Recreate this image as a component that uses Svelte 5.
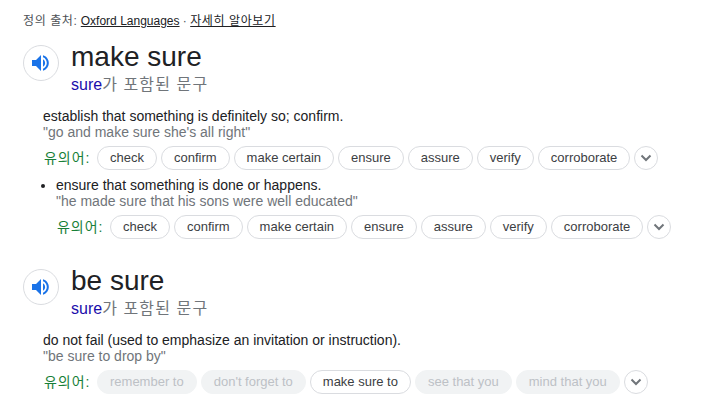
<script>
  const sense1 = ['check', 'confirm', 'make certain', 'ensure', 'assure', 'verify', 'corroborate'];
  const sense3 = [
    { t: 'remember to', off: true },
    { t: "don't forget to", off: true },
    { t: 'make sure to', off: false },
    { t: 'see that you', off: true },
    { t: 'mind that you', off: true }
  ];
</script>

{#snippet speaker()}
  <button class="speaker" aria-label="듣기">
    <svg width="20" height="20" viewBox="0 0 20 20">
      <path d="M1 7h4l5-5v16l-5-5H1z" fill="#1a73e8" />
      <path d="M12 6.2c1.3.8 2.1 2.2 2.1 3.8s-.8 3-2.1 3.8z" fill="#1a73e8" />
      <path d="M12 2.3c3.3.9 5.8 4 5.8 7.7s-2.5 6.8-5.8 7.7v-2c2.2-.8 3.8-3.1 3.8-5.7s-1.6-4.9-3.8-5.7z" fill="#1a73e8" />
    </svg>
  </button>
{/snippet}

{#snippet synonyms(items)}
  <div class="syn">
    <span class="syn-label ko">유의어:</span>
    {#each items as item}
      <span class="chip" class:off={item.off}>{item.t ?? item}</span>
    {/each}
    <button class="more" aria-label="더보기">
      <svg width="12" height="8" viewBox="0 0 12 8">
        <path d="M1.5 1.5 6 6l4.5-4.5" fill="none" stroke="#70757a" stroke-width="2" />
      </svg>
    </button>
  </div>
{/snippet}

<div class="page">
  <div class="source">
    <span class="ko">정의 출처:</span> <a href="#src">Oxford Languages</a> · <a class="ko" href="#more">자세히 알아보기</a>
  </div>

  <section class="entry">
    <div class="head">
      {@render speaker()}
      <div>
        <h2>make sure</h2>
        <div class="sub"><span class="hl">sure</span><span class="ko">가 포함된 문구</span></div>
      </div>
    </div>
    <div class="body">
      <div class="def">establish that something is definitely so; confirm.</div>
      <div class="ex">"go and make sure she's all right"</div>
      {@render synonyms(sense1)}
      <ul>
        <li>
          <div class="def">ensure that something is done or happens.</div>
          <div class="ex">"he made sure that his sons were well educated"</div>
          {@render synonyms(sense1)}
        </li>
      </ul>
    </div>
  </section>

  <section class="entry second">
    <div class="head">
      {@render speaker()}
      <div>
        <h2>be sure</h2>
        <div class="sub"><span class="hl">sure</span><span class="ko">가 포함된 문구</span></div>
      </div>
    </div>
    <div class="body">
      <div class="def">do not fail (used to emphasize an invitation or instruction).</div>
      <div class="ex">"be sure to drop by"</div>
      {@render synonyms(sense3)}
    </div>
  </section>
</div>

<style>
  :global(body) {
    background: #fff;
  }

  .page {
    height: 414px;
    box-sizing: border-box;
    padding: 13px 0 0 23px;
    overflow: hidden;
    font-family: "Liberation Sans", "Noto Sans CJK KR", sans-serif;
    color: #202124;
  }

  /* hangul in the reference runs a full em wide */
  .ko {
    letter-spacing: 0.07em;
  }

  .source {
    font-size: 12px;
    line-height: 16px;
    color: #4d5156;
  }

  .source .ko {
    letter-spacing: 0.05em;
  }

  .source a {
    color: #202124;
    text-decoration: underline;
  }

  .entry {
    margin-top: 16px;
  }

  .entry.second {
    margin-top: 30px;
  }

  .head {
    display: flex;
    align-items: flex-start;
    gap: 12px;
  }

  .speaker {
    flex: none;
    width: 36px;
    height: 36px;
    padding: 0;
    display: flex;
    align-items: center;
    justify-content: center;
    background: #fff;
    border: 1px solid #dadce0;
    border-radius: 50%;
  }

  h2 {
    margin: -6px 0 0;
    font-size: 28px;
    line-height: 36px;
    font-weight: 400;
  }

  .sub {
    font-size: 16px;
    line-height: 20px;
    color: #70757a;
  }

  .hl {
    color: #1a0dab;
  }

  .body {
    margin: 13px 0 0 20px;
    font-size: 14px;
    line-height: 16px;
  }

  .ex {
    color: #70757a;
  }

  .syn {
    display: flex;
    align-items: center;
    gap: 4px;
    margin-top: 6px;
    height: 24px;
  }

  .syn-label {
    width: 49px;
    flex: none;
    margin-left: 1px;
    color: #188038;
    white-space: nowrap;
  }

  .chip {
    box-sizing: border-box;
    height: 24px;
    padding: 0 12px;
    display: flex;
    align-items: center;
    font-size: 13px;
    color: #3c4043;
    background: #fff;
    border: 1px solid #dadce0;
    border-radius: 12px;
    white-space: nowrap;
  }

  .chip.off {
    color: #bdc1c6;
    background: #f1f3f4;
    border-color: #f1f3f4;
  }

  .more {
    box-sizing: border-box;
    width: 24px;
    height: 24px;
    padding: 0;
    display: flex;
    align-items: center;
    justify-content: center;
    background: #fff;
    border: 1px solid #dadce0;
    border-radius: 50%;
  }

  ul {
    margin: 7px 0 0;
    padding-left: 13px;
  }
</style>
